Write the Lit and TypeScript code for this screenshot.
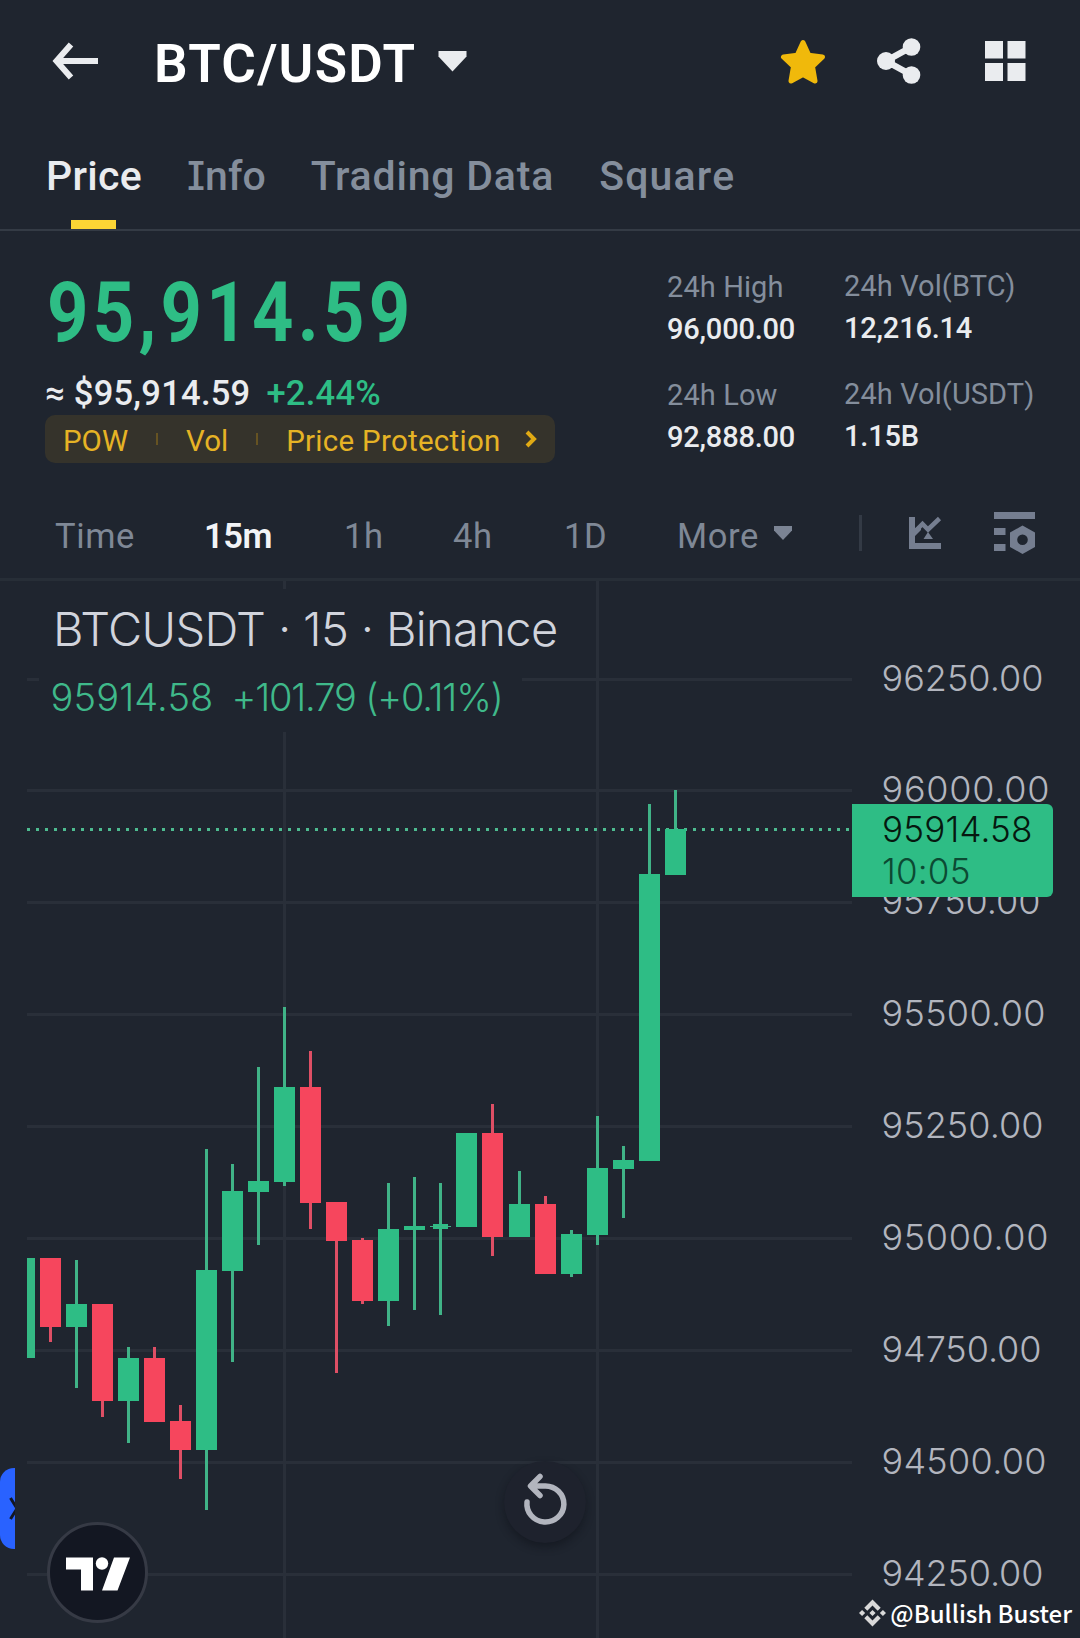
import { LitElement, html, svg, css } from "lit";
import { customElement, property } from "lit/decorators.js";
import { classMap } from "lit/directives/class-map.js";

type Candle = {
  x: number;
  up: boolean;
  high: number;
  top: number;
  bottom: number;
  low: number;
  thin?: boolean;
};

const c = (x: number, up: boolean, high: number, top: number, bottom: number, low: number, thin = false): Candle => ({
  x, up, high, top, bottom, low, thin,
});

const CANDLES: Candle[] = [
  c(50.5, false, 1258, 1258, 1327, 1342),
  c(76.5, true, 1260, 1304, 1327, 1388),
  c(102.5, false, 1304, 1304, 1401, 1417),
  c(128.5, true, 1347, 1358, 1401, 1443),
  c(154.5, false, 1347, 1358, 1422, 1422),
  c(180.5, false, 1405, 1421, 1450, 1479),
  c(206.5, true, 1149, 1270, 1450, 1510),
  c(232.5, true, 1164, 1191, 1271, 1362),
  c(258.5, true, 1067, 1181, 1192, 1245),
  c(284.5, true, 1007, 1087, 1182, 1186),
  c(310.5, false, 1051, 1087, 1203, 1229),
  c(336.5, false, 1202, 1202, 1241, 1373),
  c(362.5, false, 1238, 1240, 1301, 1304),
  c(388.5, true, 1183, 1229, 1301, 1326),
  c(414.5, true, 1177, 1226, 1230, 1310),
  c(440.5, true, 1183, 1224, 1229, 1315, true),
  c(466.5, true, 1133, 1133, 1227, 1227),
  c(492.5, false, 1104, 1133, 1237, 1256),
  c(519.5, true, 1171, 1204, 1237, 1237),
  c(545.5, false, 1196, 1204, 1274, 1274),
  c(571.5, true, 1230, 1234, 1274, 1277),
  c(597.5, true, 1116, 1168, 1235, 1245),
  c(623.5, true, 1146, 1160, 1169, 1218),
  c(649.5, true, 804, 874, 1161, 1161),
  c(675.5, true, 790, 829, 875, 875),
];

const LEVELS: { y: number; label: string; width: number }[] = [
  { y: 679.5, label: "96250.00", width: 161 },
  { y: 790.5, label: "96000.00", width: 167 },
  { y: 902.5, label: "95750.00", width: 158 },
  { y: 1014.5, label: "95500.00", width: 163 },
  { y: 1126.5, label: "95250.00", width: 161 },
  { y: 1238.5, label: "95000.00", width: 166 },
  { y: 1350.5, label: "94750.00", width: 159 },
  { y: 1462.5, label: "94500.00", width: 164 },
  { y: 1574.5, label: "94250.00", width: 161 },
];

@customElement("pair-header")
export class PairHeader extends LitElement {
  static styles = css`
    :host { display: block; }
    .bar { display: flex; align-items: center; height: 122px; padding: 0 53px 0 51px; color: #eaecef; }
    svg { display: block; flex: none; }
    .title {
      margin: 5px 0 0 55px; flex: none; line-height: 60px;
      font-size: 53px; font-weight: 600; letter-spacing: 1.25px; color: #fff; white-space: nowrap;
    }
    .caret { margin-left: 22px; }
    .actions { display: flex; align-items: center; margin-left: auto; }
    .share { margin-left: 49px; }
    .grid { margin-left: 64px; }
  `;
  render() {
    return html`
      <header class="bar">
        <svg width="48" height="40" viewBox="0 0 48 40">
          <path d="M20 3.500 5.500 20l14.500 16.500M5 20h42" fill="none" stroke="#eaecef" stroke-width="6" />
        </svg>
        <div class="title">BTC/USDT</div>
        <svg class="caret" width="29" height="22" viewBox="0 0 29 22">
          <path d="M.5 1H28.500V6.500L14.500 21.500.5 6.500Z" fill="#eaecef" />
        </svg>
        <div class="actions">
          <svg width="46" height="48" viewBox="0 0 46 48">
            <path
              d="M23 5.500 28.800 18.300 42.500 20 32.500 29.500 35 44 23 37.500 11 44 13.500 29.500 3.500 20 17.200 18.300Z"
              fill="#f0b90b" stroke="#f0b90b" stroke-width="5" stroke-linejoin="round"
            />
          </svg>
          <svg class="share" width="46" height="48" viewBox="0 0 46 48">
            <path d="M36.500 10 11 24 36.500 38" fill="none" stroke="#eaecef" stroke-width="6.500" />
            <circle cx="36.500" cy="10" r="8.800" fill="#eaecef" />
            <circle cx="11" cy="24" r="9" fill="#eaecef" />
            <circle cx="36.500" cy="38" r="8.800" fill="#eaecef" />
          </svg>
          <svg class="grid" width="42" height="42" viewBox="0 0 42 42">
            <path d="M0 1H18V18.500H0ZM22.500 1H40.500V18.500H22.500ZM0 23H18V41H0ZM22.500 23H40.500V41H22.500Z" fill="#eaecef" />
          </svg>
        </div>
      </header>
    `;
  }
}

@customElement("page-tabs")
export class PageTabs extends LitElement {
  @property({ type: Number }) active = 0;
  static styles = css`
    :host { display: block; }
    .tabs {
      display: flex; gap: 45px; height: 107px; padding-left: 46px;
      border-bottom: 2px solid #343b45; color: #848e9c;
    }
    .tab {
      display: flex; flex-direction: column; justify-content: space-between; align-items: center;
      font-size: 41px; font-weight: 500; line-height: 50px; padding-top: 29px; box-sizing: border-box;
      white-space: nowrap; letter-spacing: 0.8px;
    }
    .tab:first-child { letter-spacing: 0.3px; }
    .tab:nth-child(2) { letter-spacing: 0; }
    .tab:last-child { letter-spacing: 1.2px; }
    .name { display: block; }
    .tab:nth-child(2) .name::first-letter { font-family: Inter, Roboto, sans-serif; font-feature-settings: "cv08"; font-size: 40px; }
    .active { color: #eaecef; }
    .active::after { content: ""; width: 45px; height: 9px; background: #fcd535; }
  `;
  render() {
    return html`<nav class="tabs">
      ${["Price", "Info", "Trading Data", "Square"].map(
        (t, i) => html`<div class=${classMap({ tab: true, active: i === this.active })}><span class="name">${t}</span></div>`
      )}
    </nav>`;
  }
}

@customElement("price-summary")
export class PriceSummary extends LitElement {
  static styles = css`
    :host { display: block; }
    .summary { display: grid; grid-template-columns: 622px 177px auto; height: 253px; padding-left: 45px; box-sizing: border-box; }
    .last {
      margin: 36px 0 0 2px; height: 94px; line-height: 92px; font-size: 84px; font-weight: 700; color: #2ebd85;
      letter-spacing: 5px; transform: scaleX(0.86); transform-origin: 0 50%; white-space: nowrap;
    }
    .sub { display: flex; gap: 16px; height: 54px; line-height: 64px; font-size: 34.5px; font-weight: 500; color: #eaecef; white-space: nowrap; letter-spacing: 0.25px; }
    .change { color: #2ebd85; }
    .badge {
      display: flex; align-items: center; box-sizing: border-box; width: 510px; height: 48px;
      padding: 0 18px 0 18px; border-radius: 10px; background: #35332b; color: #e6b325; font-size: 29.5px;
      line-height: 44px; white-space: nowrap;
    }
    .badge span { padding-top: 3px; }
    .pp { letter-spacing: 0.27px; }
    .sep { width: 2px; height: 12px; background: #665322; margin: 0 28px; }
    .badge svg { margin-left: auto; }
    .col { display: flex; flex-direction: column; gap: 24px; padding-top: 35px; white-space: nowrap; }
    .vol { padding-top: 34px; }
    .label { font-size: 29px; line-height: 42px; color: #848e9c; letter-spacing: 0.1px; }
    .value { font-size: 29px; line-height: 42px; color: #eaecef; font-weight: 500; letter-spacing: -0.2px; }
  `;
  private stat(label: string, value: string) {
    return html`<div class="stat"><div class="label">${label}</div><div class="value">${value}</div></div>`;
  }
  render() {
    return html`<section class="summary">
      <div>
        <div class="last">95,914.59</div>
        <div class="sub"><span class="fiat">≈ $95,914.59</span><span class="change">+2.44%</span></div>
        <div class="badge">
          <span class="pow">POW</span><i class="sep"></i><span>Vol</span><i class="sep"></i><span class="pp">Price Protection</span>
          <svg width="12" height="18" viewBox="0 0 12 18"><path d="M2 2 9 9 2 16" fill="none" stroke="#e0aa14" stroke-width="4" /></svg>
        </div>
      </div>
      <div class="col">${this.stat("24h High", "96,000.00")}${this.stat("24h Low", "92,888.00")}</div>
      <div class="col vol">${this.stat("24h Vol(BTC)", "12,216.14")}${this.stat("24h Vol(USDT)", "1.15B")}</div>
    </section>`;
  }
}

@customElement("interval-bar")
export class IntervalBar extends LitElement {
  static styles = css`
    :host { display: block; }
    .bar {
      display: grid; grid-template-columns: 149px 140px 109px 111px 113px auto 1fr; align-items: center; height: 97px;
      padding: 4px 0 0 55px; border-bottom: 3px solid #272e37; box-sizing: border-box;
      color: #7f8896; font-size: 34.5px; white-space: nowrap; line-height: 50px; letter-spacing: 0.6px;
    }
    .t { padding-top: 6px; }
    .on { color: #f2f4f7; font-weight: 600; letter-spacing: -0.4px; }
    .more { display: flex; align-items: center; gap: 14px; }
    .tools { display: flex; align-items: center; padding-left: 66px; }
    .rule { width: 3px; height: 36px; background: #333a45; margin-right: 47px; }
    .tools svg + svg { margin-left: 52px; }
    svg { display: block; }
  `;
  render() {
    return html`<div class="bar">
      <span class="t">Time</span><span class="t on">15m</span><span class="t">1h</span><span class="t">4h</span><span class="t">1D</span>
      <span class="more"><span class="t">More</span>
        <svg width="20" height="15" viewBox="0 0 20 15"><path d="M1 0H19V4.500L10 14 1 4.500Z" fill="#7b8494" /></svg>
      </span>
      <span class="tools">
        <i class="rule"></i>
        <svg width="33" height="34" viewBox="0 0 33 34">
          <path d="M0 1H6V27H32V33H0Z" fill="#757e90" />
          <path d="M5 16.500 13.500 8 19 13.500 30.500 2.500" fill="none" stroke="#757e90" stroke-width="4.500" />
          <path d="M5 21V13L12 8V14Z M19 16 14.500 23H24Z" fill="#757e90" />
        </svg>
        <svg width="42" height="44" viewBox="0 0 42 44">
          <path d="M0 1H41V8H0ZM0 17H11.500V24H0ZM0 33H11.500V40H0Z" fill="#757e90" />
          <path fill-rule="evenodd" d="M28.500 14.500 41 21.500V36L28.500 43 16 36V21.500ZM28.500 23.500A5.300 5.300 0 1 0 28.500 34.100 5.300 5.300 0 1 0 28.500 23.500Z" fill="#757e90" />
        </svg>
      </span>
    </div>`;
  }
}

@customElement("candle-chart")
export class CandleChart extends LitElement {
  static styles = css`
    :host { display: block; position: relative; height: 1057px; overflow: hidden; font-family: Inter, "Liberation Sans", sans-serif; font-weight: 300; }
    .canvas { display: block; }
    .axis { font-size: 36px; fill: #b2b5be; }
    .legend { position: absolute; left: 39px; top: 8px; width: 483px; height: 143px; background: #1f252f; white-space: nowrap; }
    .symbol { padding-left: 14px; margin-top: 7px; height: 66px; line-height: 66px; font-size: 47px; letter-spacing: -0.65px; color: #d1d4dc; }
    .quote { display: flex; gap: 18px; padding-left: 11.500px; height: 60px; line-height: 70px; font-size: 38px; letter-spacing: 0.15px; color: #3fb98a; }
    .delta { letter-spacing: -1.15px; }
    .tag {
      position: absolute; left: 852px; top: 223px; width: 201px; height: 93px; box-sizing: border-box; padding: 4px 0 0 30px;
      border-radius: 0 6px 6px 0; background: #2ebd85; color: #06180f; font-size: 35px; line-height: 42px; letter-spacing: 0.2px;
    }
    .tag .left { color: #0c4a33; }
    .expand { position: absolute; left: 0; top: 887px; width: 15px; height: 81px; border-radius: 14px 0 0 14px; background: #2962ff; }
    .tv {
      position: absolute; left: 47px; top: 941px; width: 101px; height: 101px; box-sizing: border-box;
      border: 3px solid #363a45; border-radius: 50%; background: #131722;
    }
    .reset {
      position: absolute; left: 504px; top: 880px; width: 82px; height: 82px; border-radius: 50%;
      background: #1e222d; box-shadow: 0 4px 8px rgba(10, 13, 20, 0.45);
    }
    .mark {
      position: absolute; right: 8px; top: 1012px; display: flex; align-items: center; gap: 4px;
      font: 500 24px/40px "Noto Sans CJK SC", sans-serif; color: #fff; white-space: nowrap;
    }
  `;
  private candle(k: Candle) {
    const body = k.up ? "#2ebd85" : "#f6465d";
    const wick = k.up ? "#40b387" : "#de4f65";
    const w = k.thin ? 15 : 21;
    return svg`
      <rect x=${k.x - 1.5} y=${k.high} width="3" height=${k.low - k.high} fill=${wick} />
      <rect x=${k.x - w / 2} y=${k.top} width=${w} height=${k.bottom - k.top} fill=${body} />
      ${k.thin ? svg`<rect x=${k.x - 10.5} y=${k.top + 2} width="21" height="1" fill=${wick} />` : ""}
    `;
  }
  render() {
    return html`
      <svg class="canvas" width="1080" height="1057" viewBox="0 581 1080 1057">
        <g fill="#292f39">
          ${LEVELS.map((l) => svg`<rect x="27" y=${l.y - 1.5} width="825" height="3" />`)}
          <rect x="283" y="581" width="3" height="1057" />
          <rect x="596" y="581" width="3" height="1057" />
        </g>
        <line x1="27" y1="829.500" x2="852" y2="829.500" stroke="#4dbb90" stroke-width="3" stroke-dasharray="3 6" />
        <rect x="27" y="1258" width="8" height="100" fill="#34b984" />
        ${CANDLES.map((k) => this.candle(k))}
        <g class="axis">
          ${LEVELS.map((l) => svg`<text x="881.500" y=${l.y + 11.5} textLength=${l.width + 1}>${l.label}</text>`)}
        </g>
      </svg>
      <div class="legend">
        <div class="symbol">BTCUSDT · 15 · Binance</div>
        <div class="quote"><span>95914.58</span><span class="delta">+101.79 (+0.11%)</span></div>
      </div>
      <div class="tag"><div class="px">95914.58</div><div class="left">10:05</div></div>
      <svg class="expand" viewBox="0 0 15 81"><path d="M10.500 30 17 40.500 10.500 51" fill="none" stroke="#131722" stroke-width="3" /></svg>
      <div class="tv">
        <svg width="95" height="95" viewBox="50 1525.500 95 95">
          <path d="M66 1558H93V1591H81V1570H66ZM114 1558H130L117.500 1591H102Z" fill="#fff" />
          <circle cx="102" cy="1564" r="6.200" fill="#fff" />
        </svg>
      </div>
      <div class="reset">
        <svg width="82" height="82" viewBox="504 1461 82 82">
          <path d="M527 1502A18.500 18 0 1 0 545 1486H531M540 1476.500 530.500 1486 540 1495.500" fill="none" stroke="#b2b5be" stroke-width="5.500" stroke-linecap="round" stroke-linejoin="round" />
        </svg>
      </div>
      <div class="mark">
        <svg width="27" height="28" viewBox="0 0 28 28" fill="#d9d9d9">
          <path d="M14 0 22.500 8.500 19.400 11.600 14 6.200 8.600 11.600 5.500 8.500ZM14 28 22.500 19.500 19.400 16.400 14 21.800 8.600 16.400 5.500 19.500Z" />
          <path d="M14 10.800 17.200 14 14 17.200 10.800 14ZM3.200 10.800 6.400 14 3.200 17.200 0 14ZM24.800 10.800 28 14 24.800 17.200 21.600 14Z" />
        </svg>
        <span>@Bullish Buster</span>
      </div>
    `;
  }
}

@customElement("app-root")
export class AppRoot extends LitElement {
  static styles = css`
    :host { display: block; width: 1080px; height: 1638px; overflow: hidden; background: #1f252f; font-family: Roboto, "Noto Sans", sans-serif; }
  `;
  render() {
    return html`
      <pair-header></pair-header>
      <page-tabs></page-tabs>
      <price-summary></price-summary>
      <interval-bar></interval-bar>
      <candle-chart></candle-chart>
    `;
  }
}
